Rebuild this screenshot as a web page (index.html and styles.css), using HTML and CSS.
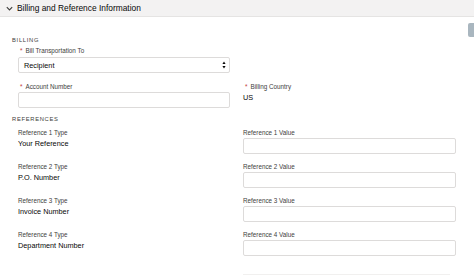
FILE: index.html
```html
<!DOCTYPE html>
<html lang="en">
<head>
  <meta charset="UTF-8">
  <meta name="viewport" content="width=device-width, initial-scale=1.0">
  <title>Billing and Reference Information</title>
  <link rel="stylesheet" href="styles.css">
</head>
<body>
  <div class="section">
    <div class="section-header">
      <svg class="chevron" width="7" height="5" viewBox="0 0 7 5">
        <path d="M0.8 1.2 L3.5 3.9 L6.2 1.2" fill="none" stroke="#3e3e3c" stroke-width="1.1"/>
      </svg>
      <span>Billing and Reference Information</span>
    </div>

    <div class="section-body">
      <div class="group-title">Billing</div>
      <div class="form-grid billing">
        <div class="field">
          <label class="required">Bill Transportation To</label>
          <div class="select">
            <span>Recipient</span>
            <svg width="4" height="8" viewBox="0 0 4 8">
              <path d="M2 0.5 L3.6 3 L0.4 3 Z M2 7.5 L3.6 5 L0.4 5 Z" fill="#080707"/>
            </svg>
          </div>
        </div>
        <div class="field"></div>

        <div class="field">
          <label class="required">Account Number</label>
          <div class="input"></div>
        </div>
        <div class="field">
          <label class="required">Billing Country</label>
          <div class="value">US</div>
        </div>
      </div>

      <div class="group-title refs">References</div>
      <div class="form-grid">
        <div class="field">
          <label>Reference 1 Type</label>
          <div class="value">Your Reference</div>
        </div>
        <div class="field">
          <label>Reference 1 Value</label>
          <div class="input"></div>
        </div>

        <div class="field">
          <label>Reference 2 Type</label>
          <div class="value">P.O. Number</div>
        </div>
        <div class="field">
          <label>Reference 2 Value</label>
          <div class="input"></div>
        </div>

        <div class="field">
          <label>Reference 3 Type</label>
          <div class="value">Invoice Number</div>
        </div>
        <div class="field">
          <label>Reference 3 Value</label>
          <div class="input"></div>
        </div>

        <div class="field">
          <label>Reference 4 Type</label>
          <div class="value">Department Number</div>
        </div>
        <div class="field">
          <label>Reference 4 Value</label>
          <div class="input"></div>
        </div>

        <div class="field"></div>
        <div class="field"><div class="next-row"></div></div>
      </div>
    </div>
    <div class="side-tab"></div>
  </div>
</body>
</html>
```

FILE: styles.css
```css
body {
  margin: 0;
  background-color: #fff;
  font-family: "Liberation Sans", Arial, sans-serif;
  color: #080707;
}
.section {
  position: relative;
  width: 474px;
  height: 275px;
  overflow: hidden;
}
.section-header {
  height: 17px;
  background-color: #f3f2f2;
  border-bottom: 1px solid #e5e4e3;
  box-sizing: border-box;
  display: flex;
  align-items: center;
  padding-left: 6px;
  font-size: 8.4px;
  color: #080707;
}
.chevron {
  margin-right: 4px;
}
.section-body {
  padding: 19px 18px 0 12px;
}
.group-title {
  font-size: 5.8px;
  line-height: 8px;
  letter-spacing: 0.7px;
  text-transform: uppercase;
  color: #3e3e3c;
  margin-bottom: 3px;
}
.group-title.refs {
  margin-top: 7px;
  margin-bottom: 6px;
}
.form-grid {
  display: grid;
  grid-template-columns: 212px 213px;
  column-gap: 13px;
  row-gap: 9px;
  padding-left: 6px;
}
.form-grid.billing {
  row-gap: 10px;
}
.field label {
  display: block;
  font-size: 6.3px;
  line-height: 8px;
  color: #3e3e3c;
  margin-bottom: 1px;
}
.field label.required::before {
  content: "*";
  color: #c23934;
  margin: 0 3px 0 2px;
}
.value {
  font-size: 7.3px;
  line-height: 10px;
  margin-top: 2px;
}
.input,
.select {
  height: 16px;
  border: 1px solid #dddbda;
  border-radius: 2px;
  box-sizing: border-box;
  background-color: #fff;
}
.select {
  height: 16px;
  margin-top: 2px;
  display: flex;
  align-items: center;
  justify-content: space-between;
  padding: 0 3px 0 5px;
  font-size: 7.3px;
}
.next-row {
  margin-top: 9px;
  height: 1px;
  width: 207px;
  background-color: #f1f0ef;
}
.side-tab {
  position: absolute;
  right: 0;
  top: 23px;
  width: 6px;
  height: 14px;
  background-color: #a9b6bf;
  border-radius: 2px 0 0 2px;
}
```
